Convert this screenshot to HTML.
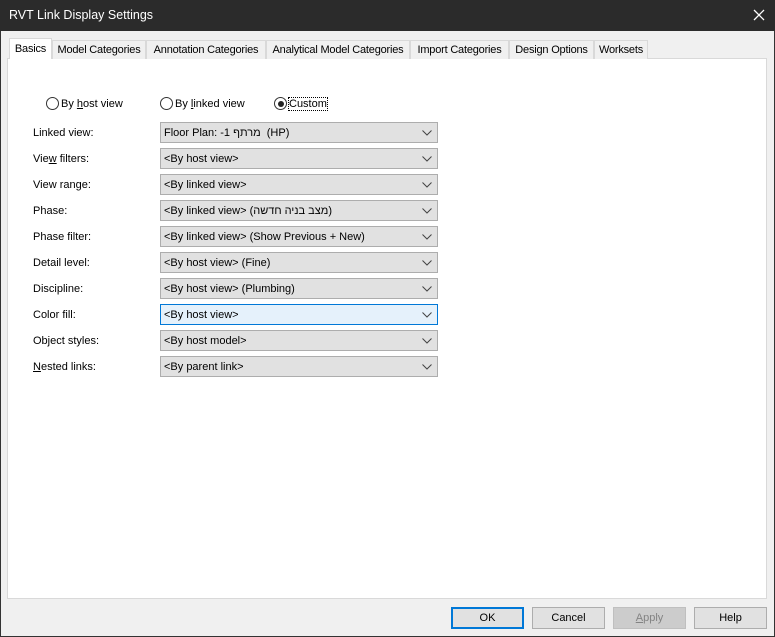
<!DOCTYPE html>
<html><head><meta charset="utf-8"><style>
*{box-sizing:border-box;margin:0;padding:0}
body{width:775px;height:637px;overflow:hidden;background:#f0f0f0;font-family:"Liberation Sans","Noto Sans CJK SC",sans-serif;font-size:11px;color:#000;position:relative}
.win{position:absolute;left:0;top:0;width:775px;height:637px;border:1px solid #333;border-top:none}
.title{position:absolute;left:0;top:0;width:775px;height:31px;background:#2b2b2b;color:#fff;font-size:12.5px;line-height:31px;padding-left:9px}
.close{position:absolute;right:10px;top:9px}
.panel{position:absolute;left:7px;top:58px;width:760px;height:541px;background:#fff;border:1px solid #d9d9d9}
.tab{position:absolute;top:40px;height:19px;background:#f0f0f0;border:1px solid #d9d9d9;border-bottom:none;line-height:19px;text-align:center;white-space:nowrap;letter-spacing:-0.2px}
.tab.sel{top:38px;height:21px;background:#fff;z-index:2;line-height:20px}
.lbl{position:absolute;left:33px}
.dd{position:absolute;left:160px;width:278px;height:21px;background:#e1e1e1;border:1px solid #adadad;line-height:20px;padding-left:3px}
.dd.f{background:#e5f1fb;border-color:#0078d7}
.dd svg{position:absolute;right:5px;top:7px}
.rad{position:absolute;top:97px;line-height:14px}
.rad i{display:inline-block;width:13px;height:13px;border:1px solid #333;border-radius:50%;vertical-align:-3px;margin-right:2px;position:relative;background:#fff}
.rad i.on:after{content:"";position:absolute;left:2.5px;top:2.5px;width:6px;height:6px;border-radius:50%;background:#222}
.btn{position:absolute;top:607px;width:73px;height:22px;background:#e1e1e1;border:1px solid #adadad;text-align:center;line-height:20px}
u{text-decoration:underline}
</style></head><body>
<div class="win"></div>
<div class="title">RVT Link Display Settings<svg class="close" width="12" height="12"><path d="M1 1L11 11M11 1L1 11" stroke="#fff" stroke-width="1.3"/></svg></div>
<div class="panel"></div>
<div class="tab sel" style="left:9px;width:43px">Basics</div>
<div class="tab" style="left:52px;width:94px">Model Categories</div>
<div class="tab" style="left:146px;width:120px">Annotation Categories</div>
<div class="tab" style="left:266px;width:144px">Analytical Model Categories</div>
<div class="tab" style="left:410px;width:99px">Import Categories</div>
<div class="tab" style="left:509px;width:85px">Design Options</div>
<div class="tab" style="left:594px;width:54px">Worksets</div>

<div class="rad" style="left:46px"><i></i>By <u>h</u>ost view</div>
<div class="rad" style="left:160px"><i></i>By <u>l</u>inked view</div>
<div class="rad" style="left:274px"><i class="on"></i><span style="outline:1px dotted #000">Custom</span></div>

<div class="lbl" style="top:127px">Linked view:</div>
<div class="lbl" style="top:153px">Vie<u>w</u> filters:</div>
<div class="lbl" style="top:179px">View range:</div>
<div class="lbl" style="top:205px">Phase:</div>
<div class="lbl" style="top:231px">Phase filter:</div>
<div class="lbl" style="top:257px">Detail level:</div>
<div class="lbl" style="top:283px">Discipline:</div>
<div class="lbl" style="top:309px">Color fill:</div>
<div class="lbl" style="top:335px">Object styles:</div>
<div class="lbl" style="top:361px"><u>N</u>ested links:</div>

<div class="dd" style="top:122px">Floor Plan: -1 ‏מרתף‏ &nbsp;(HP)<svg width="10" height="6"><path d="M0.5 0.5L5 5L9.5 0.5" fill="none" stroke="#444"/></svg></div>
<div class="dd" style="top:148px">&lt;By host view&gt;<svg width="10" height="6"><path d="M0.5 0.5L5 5L9.5 0.5" fill="none" stroke="#444"/></svg></div>
<div class="dd" style="top:174px">&lt;By linked view&gt;<svg width="10" height="6"><path d="M0.5 0.5L5 5L9.5 0.5" fill="none" stroke="#444"/></svg></div>
<div class="dd" style="top:200px">&lt;By linked view&gt; (‏מצב בניה חדשה‏)<svg width="10" height="6"><path d="M0.5 0.5L5 5L9.5 0.5" fill="none" stroke="#444"/></svg></div>
<div class="dd" style="top:226px">&lt;By linked view&gt; (Show Previous + New)<svg width="10" height="6"><path d="M0.5 0.5L5 5L9.5 0.5" fill="none" stroke="#444"/></svg></div>
<div class="dd" style="top:252px">&lt;By host view&gt; (Fine)<svg width="10" height="6"><path d="M0.5 0.5L5 5L9.5 0.5" fill="none" stroke="#444"/></svg></div>
<div class="dd" style="top:278px">&lt;By host view&gt; (Plumbing)<svg width="10" height="6"><path d="M0.5 0.5L5 5L9.5 0.5" fill="none" stroke="#444"/></svg></div>
<div class="dd f" style="top:304px">&lt;By host view&gt;<svg width="10" height="6"><path d="M0.5 0.5L5 5L9.5 0.5" fill="none" stroke="#444"/></svg></div>
<div class="dd" style="top:330px">&lt;By host model&gt;<svg width="10" height="6"><path d="M0.5 0.5L5 5L9.5 0.5" fill="none" stroke="#444"/></svg></div>
<div class="dd" style="top:356px">&lt;By parent link&gt;<svg width="10" height="6"><path d="M0.5 0.5L5 5L9.5 0.5" fill="none" stroke="#444"/></svg></div>

<div class="btn" style="left:451px;border:2px solid #0078d7;line-height:18px">OK</div>
<div class="btn" style="left:532px">Cancel</div>
<div class="btn" style="left:613px;background:#ccc;border-color:#bfbfbf;color:#838383"><u>A</u>pply</div>
<div class="btn" style="left:694px">Help</div>
</body></html>
